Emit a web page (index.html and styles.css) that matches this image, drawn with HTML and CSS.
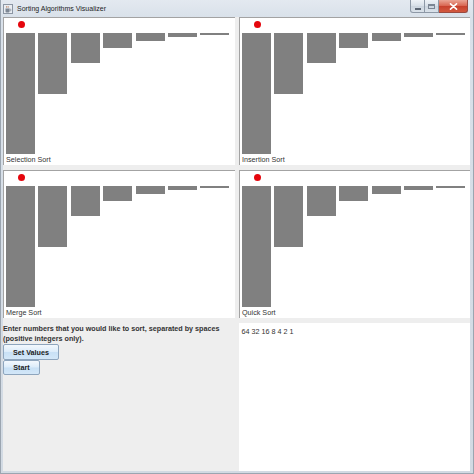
FILE: index.html
```html
<!DOCTYPE html>
<html>
<head>
<meta charset="utf-8">
<link rel="stylesheet" href="styles.css">
</head>
<body>
<div class="window">
  <div class="titlebar">
    <span class="app-icon">
      <svg width="10" height="10" viewBox="0 0 10 10">
        <rect x="0.5" y="0.5" width="9" height="9" fill="#e9edf2" stroke="#8c96a3"/>
        <path d="M2.5 4.5h4v3a1 1 0 0 1-1 1h-2a1 1 0 0 1-1-1z" fill="#7d8794"/>
        <path d="M6.5 5.2h.8a.8.8 0 0 1 0 1.6h-.8" fill="none" stroke="#7d8794" stroke-width="0.7"/>
        <path d="M3.6 3.8c-.4-.6.4-1 0-1.8M5.2 3.8c-.4-.6.4-1 0-1.8" fill="none" stroke="#b0673c" stroke-width="0.6"/>
      </svg>
    </span>
    <span class="title">Sorting Algorithms Visualizer</span>
    <div class="controls">
      <div class="ctl ctl-min"><span class="min-glyph"></span></div>
      <div class="ctl ctl-max"><span class="max-glyph"></span></div>
      <div class="ctl ctl-close">
        <svg width="9" height="7" viewBox="0 0 9 7"><path d="M1.5 0.8l6 5.4M7.5 0.8l-6 5.4" stroke="#fff" stroke-width="1.6" stroke-linecap="round"/></svg>
      </div>
    </div>
  </div>
  <div class="content">
    <div class="panel">
      <div class="dot-row"><span class="dot"></span></div>
      <div class="bars">
        <div class="bar" style="height:121px"></div>
        <div class="bar" style="height:60.5px"></div>
        <div class="bar" style="height:30.2px"></div>
        <div class="bar" style="height:15.1px"></div>
        <div class="bar" style="height:7.6px"></div>
        <div class="bar" style="height:3.8px"></div>
        <div class="bar" style="height:1.9px"></div>
      </div>
      <div class="label">Selection Sort</div>
    </div>
    <div class="panel">
      <div class="dot-row"><span class="dot"></span></div>
      <div class="bars">
        <div class="bar" style="height:121px"></div>
        <div class="bar" style="height:60.5px"></div>
        <div class="bar" style="height:30.2px"></div>
        <div class="bar" style="height:15.1px"></div>
        <div class="bar" style="height:7.6px"></div>
        <div class="bar" style="height:3.8px"></div>
        <div class="bar" style="height:1.9px"></div>
      </div>
      <div class="label">Insertion Sort</div>
    </div>
    <div class="panel">
      <div class="dot-row"><span class="dot"></span></div>
      <div class="bars">
        <div class="bar" style="height:121px"></div>
        <div class="bar" style="height:60.5px"></div>
        <div class="bar" style="height:30.2px"></div>
        <div class="bar" style="height:15.1px"></div>
        <div class="bar" style="height:7.6px"></div>
        <div class="bar" style="height:3.8px"></div>
        <div class="bar" style="height:1.9px"></div>
      </div>
      <div class="label">Merge Sort</div>
    </div>
    <div class="panel">
      <div class="dot-row"><span class="dot"></span></div>
      <div class="bars">
        <div class="bar" style="height:121px"></div>
        <div class="bar" style="height:60.5px"></div>
        <div class="bar" style="height:30.2px"></div>
        <div class="bar" style="height:15.1px"></div>
        <div class="bar" style="height:7.6px"></div>
        <div class="bar" style="height:3.8px"></div>
        <div class="bar" style="height:1.9px"></div>
      </div>
      <div class="label">Quick Sort</div>
    </div>
    <div class="input-pane">
      <div class="prompt">Enter numbers that you would like to sort, separated by spaces<br>(positive integers only).</div>
      <button class="btn btn-set">Set Values</button>
      <button class="btn btn-start">Start</button>
    </div>
    <div class="textarea">64 32 16 8 4 2 1</div>
  </div>
</div>
</body>
</html>
```
FILE: styles.css
```css
* { box-sizing: border-box; }
html, body { margin: 0; padding: 0; }
body { width: 474px; height: 474px; overflow: hidden; background: #d6dee7; font-family: "Liberation Sans", Arial, sans-serif; }

.window {
  width: 474px;
  height: 474px;
  display: flex;
  flex-direction: column;
  padding: 0 4px 3px 3px;
  background: linear-gradient(to bottom, #e3e9f0 0px, #d9e1ea 17px, #d2dae3 100%);
  box-shadow: inset 1px 0 0 #9ba5b0, inset -1px 0 0 #9ba5b0, inset 0 -1px 0 #9ba5b0;
  border-bottom: 0;
}

.titlebar {
  height: 17px;
  display: flex;
  align-items: center;
  flex-shrink: 0;
}
.app-icon { width: 10px; height: 10px; display: flex; margin-left: 0; margin-top: 1px; }
.title { margin-left: 4px; font-size: 7px; color: #1d1d1d; line-height: 10px; margin-top: 1px; }
.controls { margin-left: auto; margin-right: 2px; align-self: flex-start; display: flex; height: 13px; }
.ctl {
  height: 13px;
  display: flex;
  align-items: center;
  justify-content: center;
  border: 1px solid #8d98a6;
  border-top: 0;
}
.ctl-min { width: 15px; border-radius: 0 0 0 3px; background: linear-gradient(#eef2f7, #d7dfe8 50%, #cbd4de 51%, #dae2ea); }
.ctl-max { width: 14px; border-left: 0; background: linear-gradient(#eef2f7, #d7dfe8 50%, #cbd4de 51%, #dae2ea); }
.ctl-close { width: 29px; border-left: 0; border-color: #9a4a40; border-radius: 0 0 3px 0; background: linear-gradient(#eaa595, #d8644f 50%, #c7402c 51%, #d2593f); }
.min-glyph { width: 6px; height: 2px; background: #5b6573; margin-top: 5px; }
.max-glyph { width: 7px; height: 5px; border: 1px solid #7b8593; border-top-width: 2px; }

.content {
  flex: 1;
  display: grid;
  grid-template-columns: 232px 231px;
  grid-template-rows: 148px 148px 148px;
  column-gap: 4px;
  row-gap: 5px;
  background: #eeeeee;
}

.panel {
  background: #ffffff;
  border-top: 1px solid #a3a3a3;
  border-left: 1px solid #a3a3a3;
  padding-left: 2px;
  display: flex;
  flex-direction: column;
}
.dot-row { height: 15px; flex-shrink: 0; }
.dot {
  display: block;
  width: 7px;
  height: 7px;
  border-radius: 50%;
  background: #e5060d;
  margin: 3px 0 0 12px;
}
.bars { display: flex; align-items: flex-start; gap: 3.4px; }
.bar { width: 29px; background: #808080; flex-shrink: 0; }
.label {
  margin-top: auto;
  font-size: 7.2px;
  line-height: 9px;
  padding-bottom: 1px;
  color: #333333;
}

.input-pane {
  display: flex;
  flex-direction: column;
  align-items: flex-start;
  background: #eeeeee;
  padding-top: 1px;
}
.prompt {
  font-size: 7.2px;
  font-weight: bold;
  line-height: 9.6px;
  color: #333333;
  margin-bottom: 1px;
}
.btn {
  font-family: "Liberation Sans", Arial, sans-serif;
  font-size: 7.2px;
  font-weight: bold;
  color: #222222;
  border: 1px solid #8ea5bd;
  border-radius: 2px;
  background: linear-gradient(#f3f8fd, #dcecfa 48%, #c8e0f5 52%, #d3e7f8);
  padding: 0;
  margin: 0;
  display: flex;
  align-items: center;
  justify-content: center;
}
.btn-set { width: 56px; height: 16px; }
.btn-start { width: 37px; height: 15px; }

.textarea {
  background: #ffffff;
  font-size: 7.2px;
  line-height: 9px;
  color: #333333;
  padding: 3.5px 0 0 2.5px;
}
```
